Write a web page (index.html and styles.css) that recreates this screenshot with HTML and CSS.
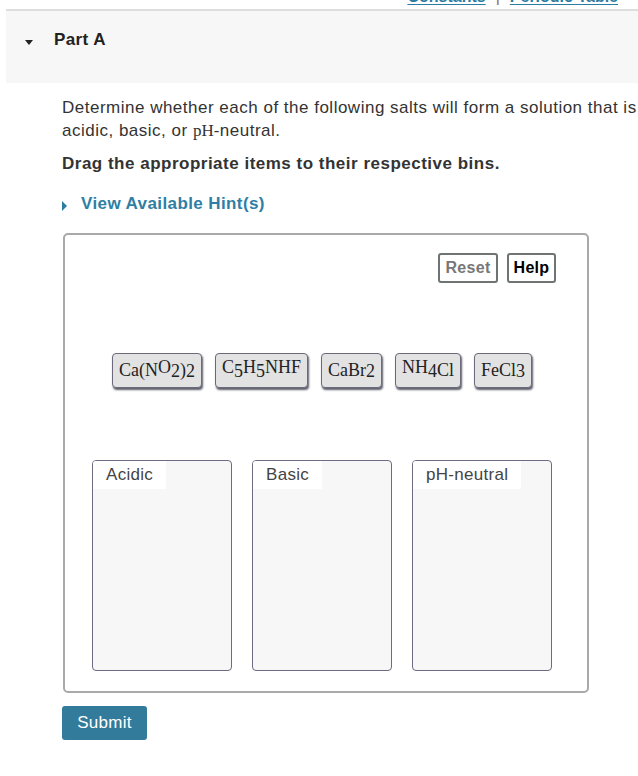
FILE: index.html
```html
<!DOCTYPE html>
<html>
<head>
<meta charset="utf-8">
<link rel="stylesheet" href="styles.css">
</head>
<body>
<div class="toplinks">
  <div class="toplinks-inner">
    <a class="link">Constants</a><span class="sep">|</span><a class="link">Periodic Table</a>
  </div>
</div>
<div class="part-header">
  <span class="caret-down"></span>
  <span class="part-title">Part A</span>
</div>
<div class="content">
  <p class="prompt">Determine whether each of the following salts will form a solution that is acidic, basic, or <span class="math">pH</span>-neutral.</p>
  <p class="instr">Drag the appropriate items to their respective bins.</p>
  <div class="hint"><span class="caret-right"></span><span class="hint-text">View Available Hint(s)</span></div>
  <div class="dnd">
    <div class="tools">
      <button class="tbtn reset">Reset</button>
      <button class="tbtn help">Help</button>
    </div>
    <div class="items">
      <div class="item">Ca(N<span class="up">O</span><span class="d">2</span>)<span class="d">2</span></div>
      <div class="item"><span class="up">C</span><span class="d">5</span><span class="up">H</span><span class="d">5</span><span class="up">NHF</span></div>
      <div class="item">CaBr<span class="d">2</span></div>
      <div class="item"><span class="up">NH</span><span class="d">4</span>Cl</div>
      <div class="item">FeCl<span class="d">3</span></div>
    </div>
    <div class="bins">
      <div class="bin"><div class="bin-label">Acidic</div></div>
      <div class="bin"><div class="bin-label">Basic</div></div>
      <div class="bin"><div class="bin-label">pH-neutral</div></div>
    </div>
  </div>
  <button class="submit">Submit</button>
</div>
</body>
</html>
```
FILE: styles.css
```css
* { box-sizing: border-box; }
html, body { margin: 0; padding: 0; background: #fff; }
body {
  font-family: "Liberation Sans", Arial, sans-serif;
  color: #333;
  width: 638px;
  height: 776px;
  overflow: hidden;
}
.toplinks {
  height: 9px;
  overflow: hidden;
  display: flex;
  justify-content: flex-end;
  padding-right: 20px;
}
.toplinks-inner {
  margin-top: -13px;
  font-size: 16px;
  font-weight: bold;
  line-height: 19px;
}
.link {
  color: #2b7ba3;
  text-decoration: underline;
  text-underline-offset: 2px;
}
.sep { color: #8a6d3b; margin: 0 10px; font-weight: normal; }
.part-header {
  margin-left: 6px;
  border-top: 2px solid #dedede;
  background: #f7f7f7;
  height: 74px;
  display: flex;
  align-items: flex-start;
  padding-top: 20px;
  padding-left: 19px;
}
.caret-down {
  width: 0; height: 0;
  border-left: 4px solid transparent;
  border-right: 4px solid transparent;
  border-top: 5px solid #222;
  margin-top: 9px;
  margin-right: 21px;
}
.part-title {
  font-weight: bold;
  font-size: 17px;
  letter-spacing: 0.4px;
  color: #222;
  line-height: 18px;
}
.content {
  padding-left: 62px;
  padding-top: 13px;
}
.prompt {
  margin: 0;
  font-size: 17px;
  letter-spacing: 0.5px;
  line-height: 23px;
  width: 576px;
  color: #333;
}
.math { font-family: "Liberation Serif", serif; font-size: 17px; letter-spacing: 0; }
.instr {
  margin: 12px 0 0;
  font-size: 17px;
  letter-spacing: 0.5px;
  font-weight: bold;
  line-height: 20px;
  color: #333;
}
.hint {
  margin-top: 19px;
  display: flex;
  align-items: center;
  height: 22px;
}
.caret-right {
  width: 0; height: 0;
  border-top: 5px solid transparent;
  border-bottom: 5px solid transparent;
  border-left: 5px solid #2d7ca3;
  margin-right: 14px;
  margin-top: 4px;
}
.hint-text {
  color: #2f7ea4;
  font-weight: bold;
  font-size: 17px;
  letter-spacing: 0.4px;
}
.dnd {
  margin-top: 18px;
  margin-left: 1px;
  width: 526px;
  border: 2px solid #a9a9a9;
  border-radius: 5px;
  padding: 18px 31px 20px 27px;
}
.tools {
  display: flex;
  justify-content: flex-end;
  gap: 9px;
}
.tbtn {
  font-family: "Liberation Sans", Arial, sans-serif;
  font-weight: bold;
  font-size: 16px;
  letter-spacing: 0.3px;
  height: 30px;
  background: #fff;
  border: 2px solid #6e7474;
  border-radius: 3px;
  padding: 0 4px;
  line-height: 24px;
}
.reset { color: #777; width: 60px; }
.help { color: #000; width: 49px; }
.items {
  margin-top: 70px;
  display: flex;
  justify-content: center;
  gap: 13px;
  padding-right: 4px;
  height: 36px;
}
.item {
  font-family: "Liberation Serif", serif;
  font-size: 18px;
  color: #222;
  background: #e2e2e2;
  border: 1px solid #6a6a7a;
  border-radius: 4px;
  box-shadow: 1px 2px 2px rgba(40, 40, 60, 0.75);
  height: 35px;
  padding: 0 6px;
  display: flex;
  align-items: center;
  white-space: nowrap;
}
.item .up { position: relative; top: -3px; }
.item .d { position: relative; top: 1px; }
.bins {
  margin-top: 71px;
  display: flex;
  gap: 20px;
}
.bin {
  width: 140px;
  height: 211px;
  background: #f7f7f7;
  border: 1px solid #6b6b82;
  border-radius: 4px;
}
.bin-label {
  display: inline-block;
  background: #fff;
  height: 28px;
  padding: 4px 13px 0 13px;
  font-size: 17px;
  letter-spacing: 0.3px;
  color: #444;
  border-top-left-radius: 3px;
  white-space: nowrap;
}
.submit {
  margin-top: 13px;
  width: 85px;
  height: 34px;
  background: #337b9b;
  color: #fff;
  border: none;
  border-radius: 3px;
  font-family: "Liberation Sans", Arial, sans-serif;
  font-size: 17px;
  letter-spacing: 0.3px;
  font-weight: 500;
  padding: 0;
}
```
